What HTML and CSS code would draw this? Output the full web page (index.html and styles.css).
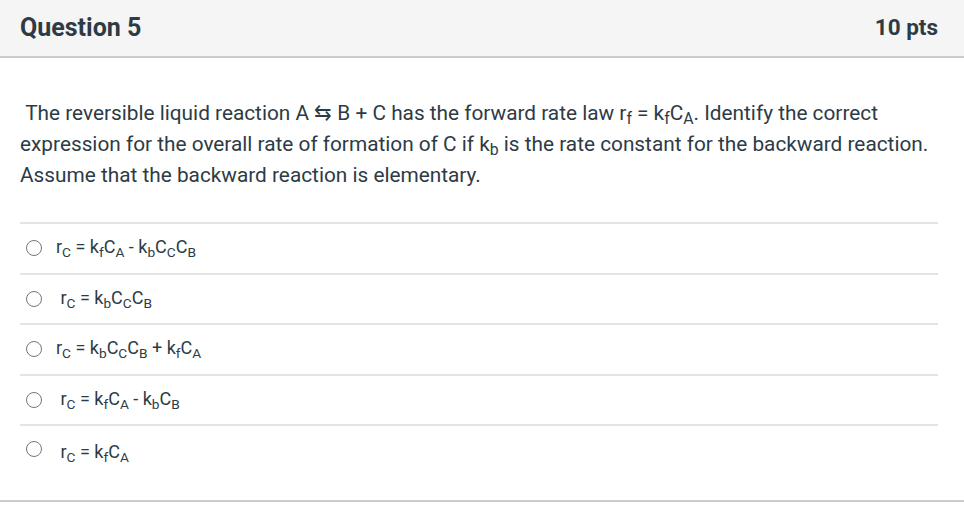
FILE: index.html
```html
<!DOCTYPE html>
<html>
<head>
<meta charset="utf-8">
<link rel="stylesheet" href="styles.css">
</head>
<body>
<div class="question">
  <div class="header">
    <h2 class="title">Question 5</h2>
    <div class="points">10 pts</div>
  </div>
  <div class="body">
    <p class="text">&nbsp;The reversible liquid reaction A ⇆ B + C has the forward rate law r<sub>f</sub> = k<sub>f</sub>C<sub>A</sub>. Identify the correct expression for the overall rate of formation of C if k<sub>b</sub> is the rate constant for the backward reaction. Assume that the backward reaction is elementary.</p>
    <div class="answers">
      <label class="answer"><span class="radio"></span><span class="label">r<sub>C</sub> = k<sub>f</sub>C<sub>A</sub> - k<sub>b</sub>C<sub>C</sub>C<sub>B</sub></span></label>
      <label class="answer"><span class="radio"></span><span class="label">&nbsp;r<sub>C</sub> = k<sub>b</sub>C<sub>C</sub>C<sub>B</sub></span></label>
      <label class="answer"><span class="radio"></span><span class="label">r<sub>C</sub> = k<sub>b</sub>C<sub>C</sub>C<sub>B</sub> + k<sub>f</sub>C<sub>A</sub></span></label>
      <label class="answer"><span class="radio"></span><span class="label">&nbsp;r<sub>C</sub> = k<sub>f</sub>C<sub>A</sub> - k<sub>b</sub>C<sub>B</sub></span></label>
      <label class="answer last"><span class="radio"></span><span class="label">&nbsp;r<sub>C</sub> = k<sub>f</sub>C<sub>A</sub></span></label>
    </div>
  </div>
</div>
</body>
</html>
```
FILE: styles.css
```css
* { box-sizing: border-box; }
html, body {
  margin: 0;
  padding: 0;
  background: #fff;
}
body {
  font-family: Roboto, "Liberation Sans", sans-serif;
  color: #2d3b45;
}
.question {
  width: 964px;
  border-bottom: 2px solid #c7cdd1;
}
.header {
  display: flex;
  justify-content: space-between;
  align-items: center;
  height: 58px;
  padding: 0 26px 2px 20px;
  background: #f5f5f5;
  border-bottom: 2px solid #c7cdd1;
}
.title {
  margin: 0;
  font-size: 25px;
  font-weight: 700;
  color: #2d3b45;
}
.points {
  font-size: 22.5px;
  font-weight: 700;
  color: #2d3b45;
}
.body {
  padding: 40px 26px 0 20px;
}
.text {
  margin: 0;
  font-size: 20.8px;
  line-height: 31px;
}
.text sub, .label sub {
  font-size: 76%;
  vertical-align: -4px;
  line-height: 1;
}
.answers {
  margin-top: 31px;
}
.answer {
  display: flex;
  align-items: center;
  height: 50.5px;
  border-top: 2px solid #e4e4e4;
  padding-left: 6px;
  font-size: 18px;
}
.answer.last {
  height: 76px;
  align-items: flex-start;
  padding-top: 15px;
}
.radio {
  width: 16px;
  height: 16px;
  border: 1.5px solid #757575;
  border-radius: 50%;
  margin-right: 14px;
  flex: none;
}
.label {
  color: #2d3b45;
}
```
